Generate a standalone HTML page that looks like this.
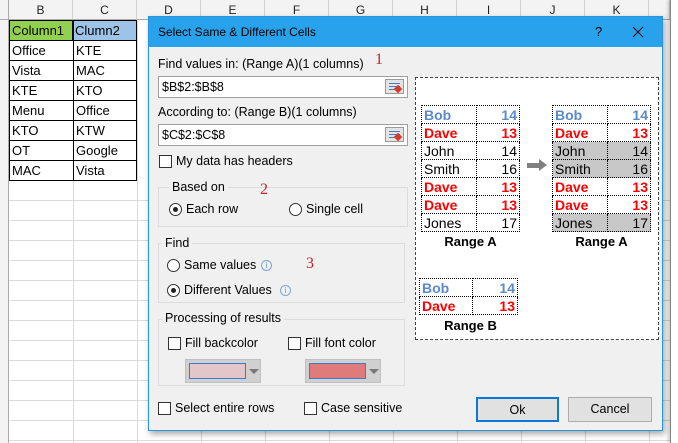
<!DOCTYPE html>
<html><head><style>
*{margin:0;padding:0;box-sizing:border-box}
body{width:678px;height:443px;overflow:hidden;background:#fff;font-family:"Liberation Sans",sans-serif;font-size:12px;position:relative}
.a{position:absolute}
.hdr{top:0;height:20px;background:#f3f3f3;border-bottom:1px solid #ababab;text-align:center;line-height:20px;color:#222;font-size:12px;border-right:1px solid #d0d0d0}
.vl{top:20px;width:1px;height:423px;background:#dadada}
.hl{left:9px;height:1px;width:662px;background:#dadada}
.cell{height:20px;line-height:19px;padding-left:2px;font-size:13px;color:#000}
.dlg{left:148px;top:16px;width:515px;height:415px;background:#f0f0f0;border:1px solid #2a95dd;box-shadow:2px 3px 6px rgba(0,0,0,.35)}
.t{font-size:12.5px;color:#000;white-space:nowrap}
.inp{background:#fff;border:1px solid #a0a0a0;height:22px;font-size:12.5px;line-height:20px;padding-left:3px}
.cb{width:13px;height:13px;border:1px solid #333;background:#fff}
.rd{width:13px;height:13px;border:1px solid #333;border-radius:50%;background:#fff}
.rd.on::after{content:"";position:absolute;left:3px;top:3px;width:5px;height:5px;border-radius:50%;background:#222}
.grp{border:1px solid #dcdcdc}
.gl{background:#f0f0f0;padding:0 3px}
.red{color:#c0282a;font-family:"Liberation Serif",serif;font-size:16px}
.info{width:11px;height:11px;border:1px solid #7aa6d8;border-radius:50%;color:#5b8fd0;font-size:8px;line-height:9px;text-align:center}
table{border-collapse:collapse;position:absolute;font-size:14px}
td{border:1px dotted #000;height:18px;padding:0 2px;line-height:16px}
td.n{text-align:right}
.b{color:#5b8ac8;font-weight:bold}
.r{color:#f00;font-weight:bold}
.g{background:#c8c8c8}
.lbl{font-weight:bold;font-size:13px;text-align:center}
.btn{border:1px solid #adadad;background:#e1e1e1;text-align:center;line-height:22px;font-size:12.5px}
</style></head><body>
<div class="a" style="left:0;top:0;width:9px;height:20px;background:#f3f3f3;border-bottom:1px solid #ababab;border-right:1px solid #ababab"></div>
<div class="a" style="left:0;top:20px;width:9px;height:423px;background:#f3f3f3;border-right:1px solid #ababab"></div>
<div class="a hdr" style="left:9px;width:64px">B</div>
<div class="a hdr" style="left:73px;width:64px">C</div>
<div class="a hdr" style="left:137px;width:64px">D</div>
<div class="a hdr" style="left:201px;width:64px">E</div>
<div class="a hdr" style="left:265px;width:64px">F</div>
<div class="a hdr" style="left:329px;width:64px">G</div>
<div class="a hdr" style="left:393px;width:64px">H</div>
<div class="a hdr" style="left:457px;width:64px">I</div>
<div class="a hdr" style="left:521px;width:64px">J</div>
<div class="a hdr" style="left:585px;width:64px">K</div>
<div class="a hdr" style="left:649px;width:21px"></div>
<div class="a vl" style="left:73px"></div><div class="a vl" style="left:137px"></div><div class="a vl" style="left:201px"></div><div class="a vl" style="left:265px"></div><div class="a vl" style="left:329px"></div><div class="a vl" style="left:393px"></div><div class="a vl" style="left:457px"></div><div class="a vl" style="left:521px"></div><div class="a vl" style="left:585px"></div><div class="a vl" style="left:649px"></div>
<div class="a hl" style="top:200px"></div><div class="a hl" style="top:220px"></div><div class="a hl" style="top:240px"></div><div class="a hl" style="top:260px"></div><div class="a hl" style="top:280px"></div><div class="a hl" style="top:300px"></div><div class="a hl" style="top:320px"></div><div class="a hl" style="top:340px"></div><div class="a hl" style="top:360px"></div><div class="a hl" style="top:380px"></div><div class="a hl" style="top:400px"></div><div class="a hl" style="top:420px"></div><div class="a hl" style="top:440px"></div>
<div class="a" style="left:670px;top:0;width:8px;height:443px;background:#fff;border-left:1px solid #888;box-shadow:-2px 0 3px rgba(0,0,0,.2)"></div>
<div class="a" style="left:9px;top:20px;width:128px;height:161px;border:1px solid #000;background:#fff"></div>
<div class="a cell" style="left:10px;top:21px;width:63px;background:#92d050;border-bottom:1px solid #000;border-right:1px solid #000">Column1</div>
<div class="a cell" style="left:73px;top:21px;width:63px;background:#9dc3e6;border-bottom:1px solid #000">Clumn2</div>
<div class="a" style="left:73px;top:21px;width:1px;height:159px;background:#000"></div>
<div class="a" style="left:10px;top:60px;width:126px;height:1px;background:#000"></div><div class="a" style="left:10px;top:80px;width:126px;height:1px;background:#000"></div><div class="a" style="left:10px;top:100px;width:126px;height:1px;background:#000"></div><div class="a" style="left:10px;top:120px;width:126px;height:1px;background:#000"></div><div class="a" style="left:10px;top:140px;width:126px;height:1px;background:#000"></div><div class="a" style="left:10px;top:160px;width:126px;height:1px;background:#000"></div>
<div class="a cell" style="left:10px;top:41px">Office</div><div class="a cell" style="left:74px;top:41px">KTE</div>
<div class="a cell" style="left:10px;top:61px">Vista</div><div class="a cell" style="left:74px;top:61px">MAC</div>
<div class="a cell" style="left:10px;top:81px">KTE</div><div class="a cell" style="left:74px;top:81px">KTO</div>
<div class="a cell" style="left:10px;top:101px">Menu</div><div class="a cell" style="left:74px;top:101px">Office</div>
<div class="a cell" style="left:10px;top:121px">KTO</div><div class="a cell" style="left:74px;top:121px">KTW</div>
<div class="a cell" style="left:10px;top:141px">OT</div><div class="a cell" style="left:74px;top:141px">Google</div>
<div class="a cell" style="left:10px;top:161px">MAC</div><div class="a cell" style="left:74px;top:161px">Vista</div>

<div class="a dlg">
 <div class="a" style="left:0;top:0;width:513px;height:30px;background:#29a2ec"></div>
 <div class="a t" style="left:9px;top:8px;font-size:12px">Select Same &amp; Different Cells</div>
 <div class="a t" style="left:446px;top:7px;font-size:13px">?</div>
 <svg class="a" style="left:483px;top:9px" width="12" height="12"><path d="M1 1L11 11M11 1L1 11" stroke="#111" stroke-width="1.1"/></svg>

 <div class="a t" style="left:9px;top:40px">Find values in: (Range A)(1 columns)</div>
 <div class="a red" style="left:226px;top:34px">1</div>
 <div class="a inp" style="left:9px;top:59px;width:250px">$B$2:$B$8</div>
 <div class="a" style="left:236px;top:62px;width:19px;height:15px;border:1px solid #999;background:#e4e4e4"><div class="a" style="left:3px;top:3px;width:11px;height:7px;background:repeating-linear-gradient(#4a78c0 0 1px,#dfe7f3 1px 3px)"></div><div class="a" style="left:9px;top:6px;width:6px;height:6px;background:#d83a2a;transform:rotate(45deg)"></div></div>
 <div class="a t" style="left:9px;top:88px">According to: (Range B)(1 columns)</div>
 <div class="a inp" style="left:9px;top:107px;width:250px">$C$2:$C$8</div>
 <div class="a" style="left:236px;top:110px;width:19px;height:15px;border:1px solid #999;background:#e4e4e4"><div class="a" style="left:3px;top:3px;width:11px;height:7px;background:repeating-linear-gradient(#4a78c0 0 1px,#dfe7f3 1px 3px)"></div><div class="a" style="left:9px;top:6px;width:6px;height:6px;background:#d83a2a;transform:rotate(45deg)"></div></div>
 <div class="a cb" style="left:10px;top:138px"></div>
 <div class="a t" style="left:27px;top:137px">My data has headers</div>

 <div class="a grp" style="left:9px;top:170px;width:250px;height:40px"></div>
 <div class="a t gl" style="left:20px;top:163px">Based on</div>
 <div class="a red" style="left:111px;top:164px">2</div>
 <div class="a rd on" style="left:20px;top:186px"></div><div class="a t" style="left:37px;top:185px">Each row</div>
 <div class="a rd" style="left:140px;top:186px"></div><div class="a t" style="left:157px;top:185px">Single cell</div>

 <div class="a grp" style="left:9px;top:226px;width:247px;height:60px"></div>
 <div class="a t gl" style="left:13px;top:219px">Find</div>
 <div class="a rd" style="left:18px;top:242px"></div><div class="a t" style="left:35px;top:241px">Same values</div><div class="a info" style="left:112px;top:243px">i</div>
 <div class="a red" style="left:157px;top:238px">3</div>
 <div class="a rd on" style="left:18px;top:267px"></div><div class="a t" style="left:35px;top:266px">Different Values</div><div class="a info" style="left:131px;top:268px">i</div>

 <div class="a grp" style="left:9px;top:302px;width:247px;height:67px"></div>
 <div class="a t gl" style="left:13px;top:294px">Processing of results</div>
 <div class="a cb" style="left:19px;top:320px"></div><div class="a t" style="left:36px;top:319px">Fill backcolor</div>
 <div class="a cb" style="left:139px;top:320px"></div><div class="a t" style="left:156px;top:319px">Fill font color</div>
 <div class="a" style="left:36px;top:342px;width:76px;height:24px;background:#d0d0d0;border:1px solid #c0c0c0"><div class="a" style="left:3px;top:3px;width:57px;height:16px;background:#e2c6ca;border:1px solid #3a7bd5"></div><div class="a" style="left:63px;top:9px;border:5px solid transparent;border-top:5px solid #777"></div></div>
 <div class="a" style="left:156px;top:342px;width:76px;height:24px;background:#d0d0d0;border:1px solid #c0c0c0"><div class="a" style="left:3px;top:3px;width:57px;height:16px;background:#e07b7b;border:1px solid #3a7bd5"></div><div class="a" style="left:63px;top:9px;border:5px solid transparent;border-top:5px solid #777"></div></div>

 <div class="a cb" style="left:9px;top:385px"></div><div class="a t" style="left:26px;top:384px">Select entire rows</div>
 <div class="a cb" style="left:155px;top:385px"></div><div class="a t" style="left:172px;top:384px">Case sensitive</div>
 <div class="a btn" style="left:327px;top:380px;width:83px;height:25px;border:2px solid #0a78d7">Ok</div>
 <div class="a btn" style="left:419px;top:380px;width:84px;height:25px">Cancel</div>

 <div class="a" style="left:266px;top:60px;width:244px;height:263px;background:#fff;border:1px dashed #444"></div>
</div>
<table style="left:421px;top:105px;width:99px"><tr><td class="b" style="width:55px">Bob</td><td class="n b">14</td></tr><tr><td class="r">Dave</td><td class="n r">13</td></tr><tr><td>John</td><td class="n">14</td></tr><tr><td>Smith</td><td class="n">16</td></tr><tr><td class="r">Dave</td><td class="n r">13</td></tr><tr><td class="r">Dave</td><td class="n r">13</td></tr><tr><td>Jones</td><td class="n">17</td></tr></table>
<table style="left:552px;top:105px;width:99px"><tr><td class="b" style="width:55px">Bob</td><td class="n b">14</td></tr><tr><td class="r">Dave</td><td class="n r">13</td></tr><tr><td class="g">John</td><td class="n g">14</td></tr><tr><td class="g">Smith</td><td class="n g">16</td></tr><tr><td class="r">Dave</td><td class="n r">13</td></tr><tr><td class="r">Dave</td><td class="n r">13</td></tr><tr><td class="g">Jones</td><td class="n g">17</td></tr></table>
<div class="a" style="left:527px;top:163px;width:12px;height:5px;background:#808080"></div>
<div class="a" style="left:539px;top:159px;border-left:8px solid #808080;border-top:6px solid transparent;border-bottom:6px solid transparent"></div>
<div class="a lbl" style="left:421px;top:234px;width:99px">Range A</div>
<div class="a lbl" style="left:552px;top:234px;width:99px">Range A</div>
<table style="left:419px;top:278px;width:99px"><tr><td class="b" style="width:53px">Bob</td><td class="n b">14</td></tr><tr><td class="r">Dave</td><td class="n r">13</td></tr></table>
<div class="a lbl" style="left:421px;top:318px;width:99px">Range B</div>
</body></html>
